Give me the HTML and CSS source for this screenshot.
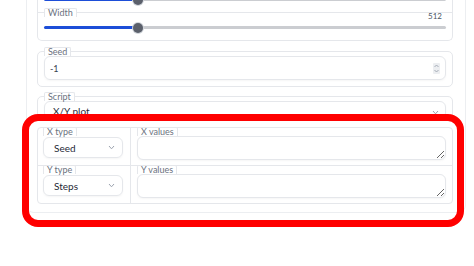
FILE: index.html
```html
<!DOCTYPE html>
<html>
<head>
<meta charset="utf-8">
<title>XY plot settings</title>
<link rel="stylesheet" href="styles.css">
</head>
<body>
<div class="panel">
  <div class="block sizes">
    <div class="item item-height">
      <div class="slider">
        <div class="fill" style="width:94px"></div>
        <div class="thumb"></div>
        <div class="rest"></div>
      </div>
    </div>
    <div class="item item-width">
      <div class="head">
        <span class="label">Width</span>
        <span class="value">512</span>
      </div>
      <div class="slider slider-width">
        <div class="fill" style="width:94px"></div>
        <div class="thumb"></div>
        <div class="rest"></div>
      </div>
    </div>
  </div>

  <div class="block seed">
    <div class="head"><span class="label">Seed</span></div>
    <div class="input">
      <span class="input-text">-1</span>
      <span class="spinner">
        <svg width="7" height="11" viewBox="0 0 7 11"><path d="M1.5 4 L3.5 2 L5.5 4 M1.5 7 L3.5 9 L5.5 7" fill="none" stroke="#9ca3af" stroke-width="0.9"/></svg>
      </span>
    </div>
  </div>

  <div class="block script">
    <div class="head"><span class="label">Script</span></div>
    <div class="select select-wide">
      <span>X/Y plot</span>
      <svg class="chev" width="7" height="5" viewBox="0 0 7 5"><path d="M1 1 L3.5 3.8 L6 1" fill="none" stroke="#9ca3af" stroke-width="1"/></svg>
    </div>
  </div>

  <div class="block xy">
    <div class="xy-row">
      <div class="cell cell-type">
        <div class="head"><span class="label">X type</span></div>
        <div class="select"><span>Seed</span><svg class="chev" width="7" height="5" viewBox="0 0 7 5"><path d="M1 1 L3.5 3.8 L6 1" fill="none" stroke="#9ca3af" stroke-width="1"/></svg></div>
      </div>
      <div class="cell cell-values">
        <div class="head"><span class="label">X values</span></div>
        <textarea class="values"></textarea>
      </div>
    </div>
    <div class="xy-row">
      <div class="cell cell-type">
        <div class="head"><span class="label">Y type</span></div>
        <div class="select"><span>Steps</span><svg class="chev" width="7" height="5" viewBox="0 0 7 5"><path d="M1 1 L3.5 3.8 L6 1" fill="none" stroke="#9ca3af" stroke-width="1"/></svg></div>
      </div>
      <div class="cell cell-values">
        <div class="head"><span class="label">Y values</span></div>
        <textarea class="values"></textarea>
      </div>
    </div>
  </div>
</div>
<div class="highlight"></div>
</body>
</html>
```

FILE: styles.css
```css
html, body {
  margin: 0;
  padding: 0;
  background: #ffffff;
  font-family: Lato, "Noto Sans", sans-serif;
  color: #374151;
}

.panel {
  margin-left: 26px;
  width: 440px;
  box-sizing: border-box;
  border: 1px solid #eceef1;
  border-top: none;
  border-radius: 0 0 8px 8px;
  padding: 0 12px 8px 10px;
  display: flex;
  flex-direction: column;
}

.block {
  border: 1px solid #e5e7eb;
  border-radius: 5px;
  background: #ffffff;
}

.head {
  display: flex;
  justify-content: space-between;
  align-items: flex-start;
  height: 9px;
}

.label {
  display: inline-block;
  height: 9px;
  box-sizing: border-box;
  padding: 0 3px;
  border: 1px solid #e5e7eb;
  border-bottom: none;
  border-radius: 2px 2px 0 0;
  background: #ffffff;
  font-size: 9px;
  line-height: 8px;
  color: #6b7280;
  white-space: nowrap;
}

/* sliders block */
.sizes {
  border-top: none;
  border-radius: 0 0 5px 5px;
}

.item {
  padding: 0 6px;
}

.item-height {
  margin-top: -6px;
  padding-bottom: 7px;
}

.item-width {
  border-top: 1px solid #e5e7eb;
  padding-bottom: 7px;
}

.item-width .head {
  margin-top: -5px;
}

.value {
  margin-top: 4px;
  margin-right: 4px;
  font-size: 8px;
  line-height: 9px;
  color: #4b5563;
}

.slider {
  display: flex;
  align-items: center;
  height: 11px;
}

.slider-width {
  margin-top: 5px;
}

.fill {
  height: 3px;
  background: #1d4ed8;
  border-radius: 2px 0 0 2px;
}

.thumb {
  width: 10px;
  height: 10px;
  margin: 0 -5px;
  border-radius: 50%;
  background: #5b606b;
  box-shadow: 0 0 0 1px #d1d5db;
  position: relative;
  z-index: 1;
}

.rest {
  flex: 1;
  height: 3px;
  background: #cbcdd1;
  border-radius: 0 2px 2px 0;
}

/* seed */
.seed {
  margin-top: 10px;
  padding: 0 6px 6px;
}

.seed .head,
.script .head {
  margin-top: -5px;
}

.input {
  display: flex;
  align-items: center;
  height: 24px;
  box-sizing: border-box;
  border: 1px solid #e5e7eb;
  border-radius: 6px;
  padding: 0 5px;
  box-shadow: 0 1px 2px rgba(0, 0, 0, 0.04);
}

.input-text {
  font-size: 9px;
  color: #374151;
}

.spinner {
  margin-left: auto;
  width: 7px;
  height: 11px;
  background: #eceef1;
  border-radius: 1px;
  display: flex;
}

/* script */
.script {
  margin-top: 9px;
  padding: 0 6px;
}

.select {
  display: flex;
  align-items: center;
  justify-content: space-between;
  height: 21px;
  box-sizing: border-box;
  border: 1px solid #e5e7eb;
  border-radius: 6px;
  padding: 0 7px 0 10px;
  font-size: 10px;
  color: #1f2937;
  box-shadow: 0 1px 2px rgba(0, 0, 0, 0.04);
}

.select-wide {
  height: 18px;
  padding: 3px 6px 0 8px;
  align-items: flex-start;
  line-height: 13px;
}

.select-wide .chev {
  margin-top: 5px;
}

/* xy plot */
.xy {
  margin-top: 7px;
  border-radius: 4px;
}

.xy-row {
  display: flex;
  border-bottom: 1px solid #e5e7eb;
}

.xy-row:last-child {
  border-bottom: none;
}

.cell {
  padding-bottom: 5px;
}

.cell .head {
  margin-top: -1px;
}

.cell-type {
  width: 93px;
  box-sizing: border-box;
  border-right: 1px solid #e5e7eb;
  padding-left: 5px;
  padding-right: 7px;
}

.cell-type .select {
  margin-top: 1px;
}

.cell-values {
  flex: 1;
  padding-left: 6px;
  padding-right: 6px;
}

.values {
  display: block;
  width: 100%;
  height: 24px;
  box-sizing: border-box;
  margin: 0;
  border: 1px solid #e5e7eb;
  border-radius: 6px;
  resize: vertical;
  font-family: Lato, "Noto Sans", sans-serif;
  font-size: 9px;
  outline: none;
  box-shadow: 0 1px 2px rgba(0, 0, 0, 0.04);
}

/* annotation */
.highlight {
  position: absolute;
  left: 22px;
  top: 114px;
  width: 442px;
  height: 113px;
  box-sizing: border-box;
  border: 7px solid #ff0000;
  border-radius: 16px;
}
```
